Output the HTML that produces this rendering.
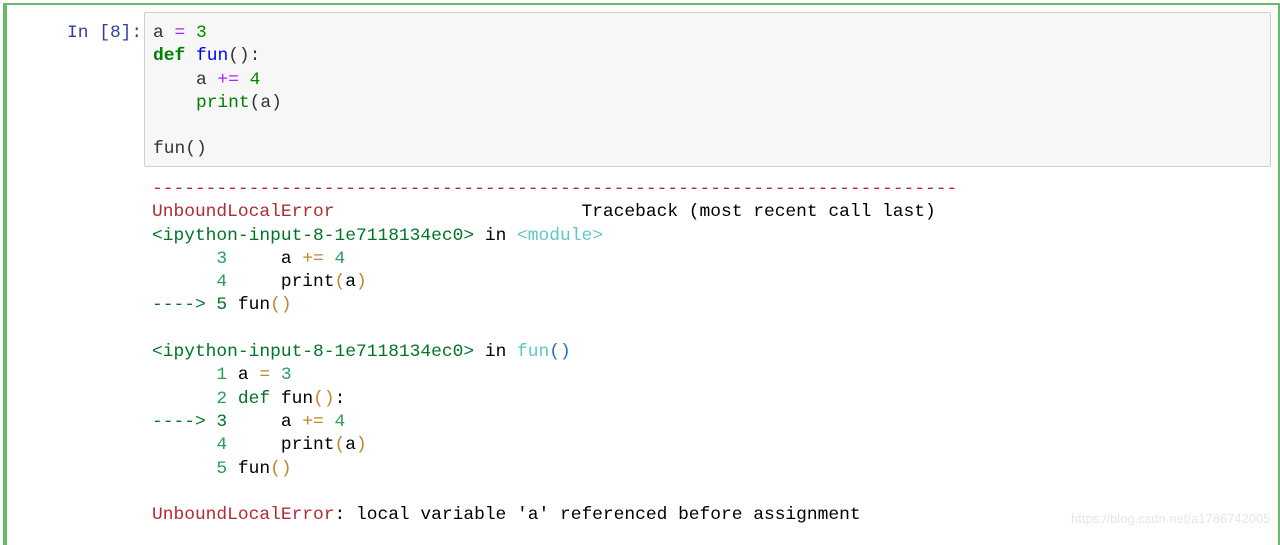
<!DOCTYPE html>
<html><head><meta charset="utf-8"><style>
html,body{margin:0;padding:0;background:#fff;width:1280px;height:535px;overflow:hidden}
.cell{position:absolute;left:3px;top:3px;width:1271px;height:540px;border-top:2px solid #66bb6a;border-left:4px solid #66bb6a;border-right:2px solid #66bb6a}
pre{margin:0;font-family:"Liberation Mono",monospace;font-size:17.9px;line-height:23.3px;white-space:pre}
.prompt{position:absolute;left:67px;top:22px;color:#303f9f;font-family:"Liberation Mono",monospace;font-size:17.9px;line-height:23px}
.inbox{position:absolute;left:144px;top:12px;width:1125px;height:153px;background:#f7f7f7;border:1px solid #cfcfcf;border-radius:2px}
.in{position:absolute;left:153px;top:22px;color:#333}
.out{position:absolute;left:152px;top:178px;color:#000}
.k{color:#008000;font-weight:bold}.f{color:#0000ff}.o{color:#aa22ff}.n{color:#080}.b{color:#008000}
.r{color:#b22b31}.g{color:#007427}.c{color:#60c6c8}.y{color:#c0862a}.bl{color:#1f6fbf}.gn{color:#2a9d5a}
.wm{position:absolute;left:1071px;top:511px;color:#e6e6e6;font-family:"Liberation Sans",sans-serif;font-size:13px}
</style></head><body>
<div class="cell"></div>
<div class="prompt">In [8]:</div>
<div class="inbox"></div>
<pre class="in">a <span class="o">=</span> <span class="n">3</span>
<span class="k">def</span> <span class="f">fun</span>():
    a <span class="o">+=</span> <span class="n">4</span>
    <span class="b">print</span>(a)

fun()</pre>
<pre class="out"><span class="r">---------------------------------------------------------------------------</span>
<span class="r">UnboundLocalError</span>                       Traceback (most recent call last)
<span class="g">&lt;ipython-input-8-1e7118134ec0&gt;</span> in <span class="c">&lt;module&gt;</span>
<span class="gn">      3</span>     a <span class="y">+=</span> <span class="gn">4</span>
<span class="gn">      4</span>     print<span class="y">(</span>a<span class="y">)</span>
<span class="g">----&gt; 5</span> fun<span class="y">()</span>

<span class="g">&lt;ipython-input-8-1e7118134ec0&gt;</span> in <span class="c">fun</span><span class="bl">()</span>
<span class="gn">      1</span> a <span class="y">=</span> <span class="gn">3</span>
<span class="gn">      2</span> <span class="g">def</span> fun<span class="y">()</span>:
<span class="g">----&gt; 3</span>     a <span class="y">+=</span> <span class="gn">4</span>
<span class="gn">      4</span>     print<span class="y">(</span>a<span class="y">)</span>
<span class="gn">      5</span> fun<span class="y">()</span>

<span class="r">UnboundLocalError</span>: local variable 'a' referenced before assignment</pre>
<div class="wm">https://blog.csdn.net/a1786742005</div>
</body></html>
